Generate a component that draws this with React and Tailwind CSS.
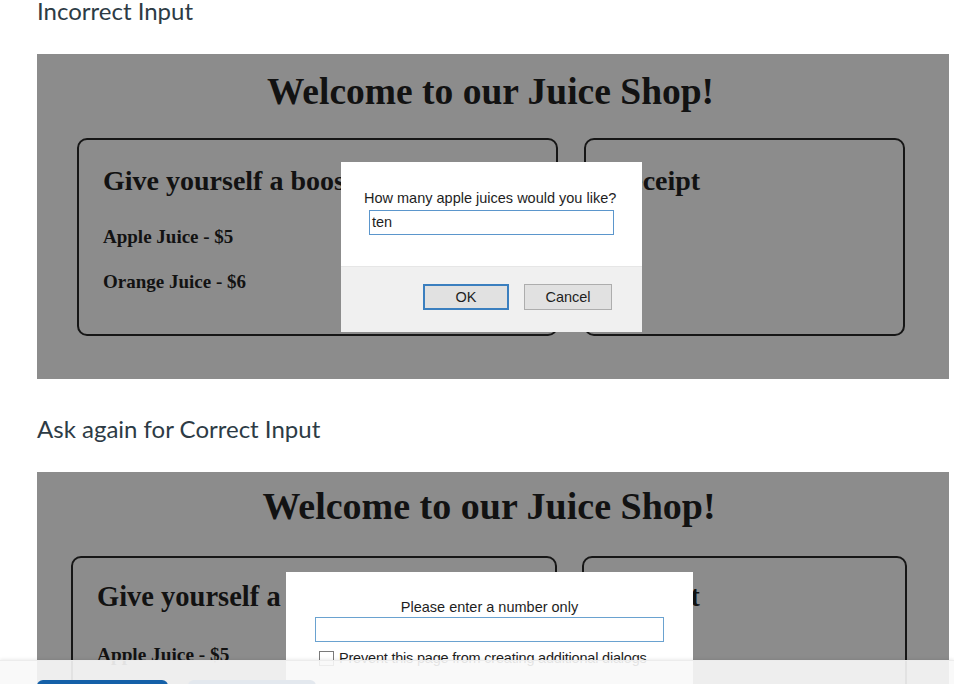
import React from "react";

const serif = { fontFamily: '"Liberation Serif", "Times New Roman", serif' };

const Card = ({ className, children }) => (
  <div className={`border-2 border-[#161616] rounded-[10px] ${className}`}>{children}</div>
);

const PromptDialog = () => (
  <div className="absolute left-[304px] top-[108px] w-[301px] h-[170px] bg-white font-['Liberation_Sans',Arial,sans-serif] text-[#1e1e1e] flex flex-col">
    <div className="h-[104px] pt-[28px] pl-[23px]">
      <p className="text-[14.5px] leading-[17px]">How many apple juices would you like?</p>
      <div className="mt-[3px] ml-[5px] w-[245px] h-[25px] border border-[#5b96cc] pl-[2px] text-[14.5px] leading-[23px]">
        ten
      </div>
    </div>
    <div className="h-[66px] bg-[#f0f0f0] border-t border-[#e6e6e6] flex justify-end items-start gap-[15px] pt-[17px] pr-[30px]">
      <button className="w-[86px] h-[26px] border-2 border-[#3b7fbf] bg-[#e1e1e1] text-[14.5px] leading-none">OK</button>
      <button className="w-[88px] h-[26px] border border-[#adadad] bg-[#e1e1e1] text-[14.5px] leading-none">Cancel</button>
    </div>
  </div>
);

const RetryDialog = () => (
  <div className="absolute left-[249px] top-[100px] w-[407px] h-[170px] bg-white font-['Liberation_Sans',Arial,sans-serif] text-[#1e1e1e] pt-[27px] pl-[29px]">
    <p className="w-[349px] text-center text-[14.5px] leading-[17px]">Please enter a number only</p>
    <div className="mt-[1px] w-[349px] h-[25px] border border-[#6aa2d0]" />
    <div className="mt-[9px] ml-[4px] flex items-center gap-[5px]">
      <span className="w-[15px] h-[15px] border border-[#7a7a7a] bg-white" />
      <span className="text-[14.5px] leading-[15px] tracking-[-0.2px]">Prevent this page from creating additional dialogs</span>
    </div>
  </div>
);

export default function App() {
  return (
    <div className="relative w-[954px] min-h-[900px] bg-white pl-[37px] font-['Lato','Noto_Sans',sans-serif] text-[#2d3b45]">
      <h3 className="text-[24px] leading-[22px]">Incorrect Input</h3>

      {/* first screenshot */}
      <div className="relative mt-[32px] w-[912px] h-[325px] bg-[#8c8c8c] text-[#121212]" style={serif}>
        <h1 className="pt-[19px] pr-[5px] text-center text-[37.5px] leading-[38px] font-bold">Welcome to our Juice Shop!</h1>
        <div className="mt-[27px] pl-[40px] flex gap-[26px]">
          <Card className="w-[481px] h-[198px] pt-[27px] pl-[24px]">
            <h2 className="text-[28px] leading-[28px] font-bold whitespace-nowrap">Give yourself a boost!</h2>
            <p className="mt-[32px] text-[19px] leading-[19px] font-bold">Apple Juice - $5</p>
            <p className="mt-[26px] text-[19px] leading-[19px] font-bold">Orange Juice - $6</p>
          </Card>
          <Card className="w-[321px] h-[198px] pt-[27px] pl-[24px]">
            <h2 className="text-[28px] leading-[28px] font-bold">Receipt</h2>
          </Card>
        </div>
        <PromptDialog />
      </div>

      <h3 className="mt-[39px] text-[24px] leading-[22px]">Ask again for Correct Input</h3>

      {/* second screenshot */}
      <div className="relative mt-[32px] w-[912px] h-[325px] bg-[#8c8c8c] text-[#121212]" style={serif}>
        <h1 className="pt-[15px] pr-[8px] text-center text-[38px] leading-[38px] font-bold">Welcome to our Juice Shop!</h1>
        <div className="mt-[31px] pl-[34px] flex gap-[25px]">
          <Card className="w-[486px] h-[200px] pt-[25px] pl-[24px]">
            <h2 className="text-[28.5px] leading-[28px] font-bold whitespace-nowrap">Give yourself a boost!</h2>
            <p className="mt-[34px] text-[19.3px] leading-[19px] font-bold">Apple Juice - $5</p>
            <p className="mt-[26px] text-[19.3px] leading-[19px] font-bold">Orange Juice - $6</p>
          </Card>
          <Card className="w-[325px] h-[200px] pt-[25px] pl-[24px]">
            <h2 className="text-[28.5px] leading-[28px] font-bold">Receipt</h2>
          </Card>
        </div>
        <RetryDialog />
      </div>

      {/* sticky footer bar */}
      <div className="fixed bottom-0 left-0 right-0 h-[24px] overflow-hidden bg-[#f8f8f8]/90 shadow-[0_-1px_3px_rgba(0,0,0,0.08)] border-t border-[#ececec] pl-[37px] pt-[19px] flex gap-[20px]">
        <div className="w-[131px] h-[38px] rounded-[6px] bg-[#1560a8]" />
        <div className="w-[128px] h-[38px] rounded-[6px] bg-[#e3e8ee]" />
      </div>
    </div>
  );
}
